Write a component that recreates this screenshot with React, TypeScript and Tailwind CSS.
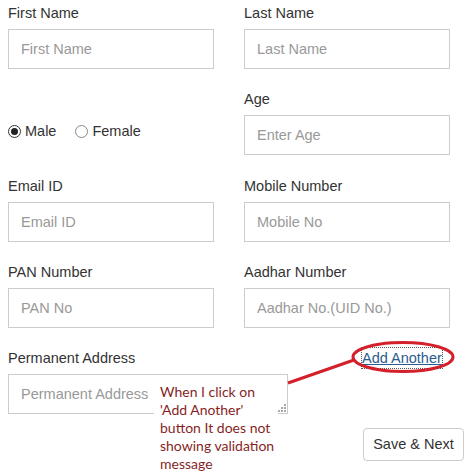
import React from 'react';

const label = "block h-[20px] leading-[20px] text-[14.5px] text-[#333] mb-[6px]";
const input =
  "block w-full h-[40px] border border-[#ccc] bg-white px-[12px] text-[14.5px] text-[#555] placeholder:text-[#999] outline-none";

function Field({ name, hint, className = '' }: { name: string; hint: string; className?: string }) {
  return (
    <div className={className}>
      <label className={label}>{name}</label>
      <input className={input} placeholder={hint} />
    </div>
  );
}

function Radio({ checked, text }: { checked?: boolean; text: string }) {
  return (
    <span className="flex items-center gap-[4px]">
      <span
        className={`flex items-center justify-center w-[13px] h-[13px] rounded-full border bg-white ${
          checked ? 'border-[#333]' : 'border-[#888]'
        }`}
      >
        {checked && <span className="w-[7px] h-[7px] rounded-full bg-[#222]" />}
      </span>
      <span>{text}</span>
    </span>
  );
}

export default function App() {
  return (
    <div className="relative w-[469px] h-[475px] bg-white overflow-hidden font-['Liberation_Sans',Arial,sans-serif] text-[#333]">
      <div className="pt-[3px] pl-[8px]">
        {/* Main grid */}
        <div className="grid grid-cols-[206px_206px] gap-x-[30px] gap-y-[20px]">
          <Field name="First Name" hint="First Name" />
          <Field name="Last Name" hint="Last Name" />

          <div className="h-[66px] pt-[32px]">
            <div className="flex items-center gap-[19px] h-[20px] leading-[20px] text-[14.5px]">
              <Radio checked text="Male" />
              <Radio text="Female" />
            </div>
          </div>
          <Field name="Age" hint="Enter Age" />

          <Field name="Email ID" hint="Email ID" className="mt-[1px]" />
          <Field name="Mobile Number" hint="Mobile No" className="mt-[1px]" />

          <Field name="PAN Number" hint="PAN No" />
          <Field name="Aadhar Number" hint="Aadhar No.(UID No.)" />
        </div>

        {/* Address row */}
        <div className="flex justify-between pr-[5px] mt-[20px]">
          <div className="w-[280px]">
            <label className={label}>Permanent Address</label>
            <div className="relative">
              <textarea
                className="block w-full h-[40px] border border-[#ccc] px-[12px] pt-[9px] text-[14.5px] leading-[20px] resize-none outline-none placeholder:text-[#999] overflow-hidden"
                placeholder="Permanent Address"
              />
              <svg className="absolute right-[2px] bottom-[2px]" width="8" height="8" viewBox="0 0 8 8">
                <rect x="6" y="0" width="2" height="2" fill="#aaa" />
                <rect x="3" y="3" width="2" height="2" fill="#aaa" />
                <rect x="6" y="3" width="2" height="2" fill="#aaa" />
                <rect x="0" y="6" width="2" height="2" fill="#aaa" />
                <rect x="3" y="6" width="2" height="2" fill="#aaa" />
                <rect x="6" y="6" width="2" height="2" fill="#aaa" />
              </svg>
            </div>
          </div>
          <div className="flex flex-col items-start w-[101px]">
            <a className="h-[20px] leading-[20px] text-[14.5px] text-[#2a5d8f] underline outline-1 outline-dotted outline-[#555] -ml-[1px]">
              Add Another
            </a>
            <button className="mt-[60px] w-[101px] h-[33px] border border-[#ccc] rounded-[4px] bg-white text-[14.5px] text-[#333]">
              Save &amp; Next
            </button>
          </div>
        </div>
      </div>

      {/* Annotation overlay */}
      <svg className="absolute left-0 top-0 pointer-events-none" width="469" height="475">
        <ellipse cx="403" cy="357" rx="50" ry="14.5" fill="none" stroke="#d4202b" strokeWidth="3" />
        <line x1="288" y1="383" x2="354" y2="360" stroke="#d4202b" strokeWidth="3" />
      </svg>
      <div className="absolute left-[154px] top-[383px] w-[124px] bg-white pl-[6px] pb-[4px] font-['Lato',sans-serif] text-[14px] leading-[18px] text-[#861f1f]">
        When I click on
        <br />
        'Add Another'
        <br />
        button It does not
        <br />
        showing validation
        <br />
        message
      </div>
    </div>
  );
}
